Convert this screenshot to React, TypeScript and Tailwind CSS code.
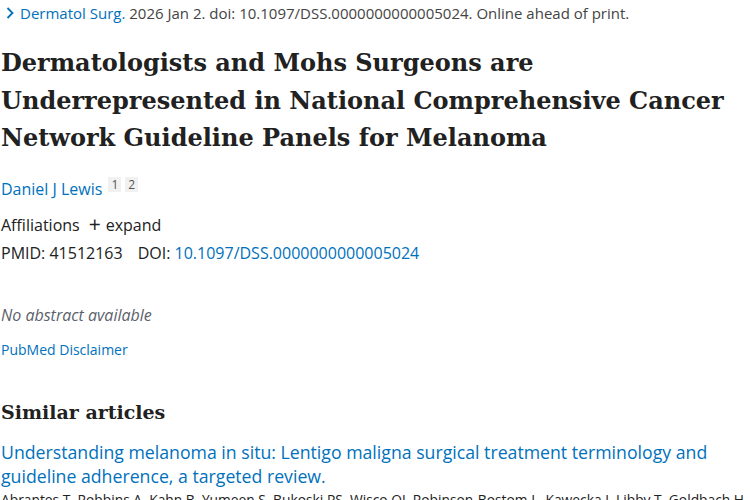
import React from "react";

const sans = "font-['Open_Sans',sans-serif]";
const serif = "font-['DejaVu_Serif',serif]";

export default function App() {
  return (
    <div className="h-[500px] w-[750px] overflow-hidden bg-white">
      <div className={`w-[752px] pl-[1px] text-[#212121] ${sans}`}>
        {/* Citation line */}
        <div className="flex h-[26px] items-center text-[15px] text-[#444]">
          <svg className="ml-[5px] mr-[6px] h-[12px] w-[8px]" viewBox="0 0 8 12" fill="none">
            <path d="M1.5 1l5 5-5 5" stroke="#0071bc" strokeWidth="1.8" />
          </svg>
          <span className="text-[#0071bc]">Dermatol Surg.</span>
          <span>&nbsp;2026 Jan 2. doi: 10.1097/DSS.0000000000005024. Online ahead of print.</span>
        </div>

        {/* Title */}
        <h1 className={`mt-[18px] text-[24px] font-bold leading-[37.5px] text-[#212121] ${serif}`}>
          Dermatologists and Mohs Surgeons are Underrepresented in National Comprehensive Cancer
          Network Guideline Panels for Melanoma
        </h1>

        {/* Authors */}
        <div className="mt-[20px] flex items-center text-[16px]">
          <span className="text-[#0071bc]">Daniel J Lewis</span>
          <span className="ml-[6px] -mt-[8px] flex gap-[4px] text-[12px] text-[#555]">
            <span className="bg-[#f1f1f1] px-[3px] leading-[15px]">1</span>
            <span className="bg-[#f1f1f1] px-[3px] leading-[15px]">2</span>
          </span>
        </div>

        {/* Affiliations */}
        <div className="mt-[12px] flex items-center text-[16px]">
          <span>Affiliations</span>
          <span className="ml-[9px] mr-[5px] text-[21px] leading-none">+</span>
          <span>expand</span>
        </div>

        {/* IDs */}
        <div className="mt-[4px] flex items-center text-[16px]">
          <span>PMID: 41512163</span>
          <span className="ml-[15px]">DOI:&nbsp;</span>
          <span className="text-[#0071bc]">10.1097/DSS.0000000000005024</span>
        </div>

        <p className="mt-[38px] text-[16px] italic text-[#5b616b]">No abstract available</p>

        <p className="mt-[12px] text-[14px] text-[#0071bc]">PubMed Disclaimer</p>

        {/* Similar articles */}
        <h2 className={`mt-[38px] text-[19px] font-bold text-[#212121] ${serif}`}>Similar articles</h2>

        <p className="mt-[14px] w-[740px] text-[17.7px] leading-[24px] text-[#0071bc]">
          Understanding melanoma in situ: Lentigo maligna surgical treatment terminology and
          guideline adherence, a targeted review.
        </p>
        <p className="mt-[2px] whitespace-nowrap text-[13.8px] text-[#212121]">
          Abrantes T, Robbins A, Kahn B, Yumeen S, Bukoski PS, Wisco OJ, Robinson-Bostom L, Kawecka J, Libby T, Goldbach H.
        </p>
      </div>
    </div>
  );
}
